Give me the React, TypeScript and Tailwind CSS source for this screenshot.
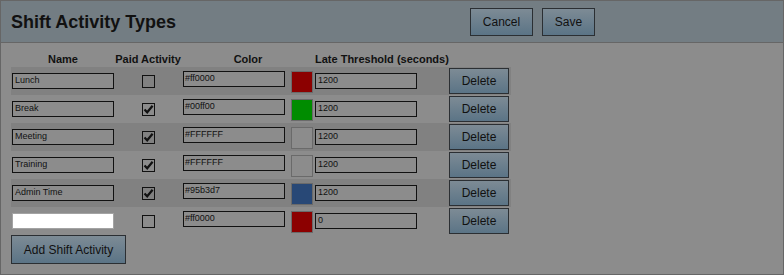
import React from "react";

type Row = { name: string; paid: boolean; color: string; swatch: string; late: string; blank?: boolean };

const rows: Row[] = [
  { name: "Lunch", paid: false, color: "#ff0000", swatch: "#8c0000", late: "1200" },
  { name: "Break", paid: true, color: "#00ff00", swatch: "#008c00", late: "1200" },
  { name: "Meeting", paid: true, color: "#FFFFFF", swatch: "#8c8c8c", late: "1200" },
  { name: "Training", paid: true, color: "#FFFFFF", swatch: "#8c8c8c", late: "1200" },
  { name: "Admin Time", paid: true, color: "#95b3d7", swatch: "#284876", late: "1200" },
  { name: "", paid: false, color: "#ff0000", swatch: "#8c0000", late: "0", blank: true },
];

const btn =
  "border border-[#2b2f33] bg-gradient-to-b from-[#7d8b95] to-[#5b7486] text-[12px] text-[#111] flex items-center justify-center";

function Check({ on }: { on: boolean }) {
  return (
    <div className="mt-[8px] w-[13px] h-[13px] border-[1.5px] border-[#111] flex items-center justify-center">
      {on && (
        <svg width="11" height="11" viewBox="0 0 11 11">
          <path d="M1.5 5.5 L4.2 8.3 L9.6 1.8" fill="none" stroke="#111" strokeWidth="2.2" />
        </svg>
      )}
    </div>
  );
}

export default function App() {
  return (
    <div
      className="w-[784px] h-[275px] border border-[#666] bg-[#8c8c8c] flex flex-col text-[#111]"
      style={{ fontFamily: '"Liberation Sans", Arial, sans-serif' }}
    >
      <div className="h-[42px] shrink-0 bg-[#737d83] border-b border-[#666] flex items-center pl-[10px]">
        <div className="text-[18px] font-bold leading-none">Shift Activity Types</div>
        <div className="ml-auto mr-[188px] flex gap-[9px] mt-[1px]">
          <div className={`${btn} w-[63px] h-[28px]`}>Cancel</div>
          <div className={`${btn} w-[53px] h-[28px]`}>Save</div>
        </div>
      </div>
      <div className="pl-[10px] flex flex-col">
        <div className="flex h-[24px] pt-[10px] text-[11px] font-bold leading-[13px]">
          <div className="w-[104px] text-center">Name</div>
          <div className="w-[66px] text-center">Paid Activity</div>
          <div className="w-[134px] text-center">Color</div>
          <div className="w-[132px] whitespace-nowrap">Late Threshold (seconds)</div>
        </div>
        {rows.map((r, i) => (
          <div
            key={i}
            className={`flex items-start w-[500px] h-[28px] text-[9px] ${i % 2 === 0 ? "bg-[#818181]" : ""}`}
          >
            <div className="w-[104px]">
              {r.blank ? (
                <div className="ml-[1px] mt-[6px] w-[102px] h-[16px] bg-white border border-[#a3a3a3]" />
              ) : (
                <div className="ml-[1px] mt-[6px] w-[102px] h-[16px] bg-[#8c8c8c] border border-[#111] flex items-center pl-[2px]">
                  {r.name}
                </div>
              )}
            </div>
            <div className="w-[66px] flex justify-center">
              <Check on={r.paid} />
            </div>
            <div className="w-[134px] flex">
              <div className="ml-[2px] mt-[4px] w-[102px] h-[16px] bg-[#8c8c8c] border border-[#111] pl-[1px] leading-[11px] pt-[1px]">
                {r.color}
              </div>
              <div
                className="ml-[6px] mt-[4px] w-[22px] h-[22px] border border-[#6a6a6a]"
                style={{ backgroundColor: r.swatch }}
              />
            </div>
            <div className="w-[132px]">
              <div className="mt-[6px] w-[102px] h-[16px] bg-[#8c8c8c] border border-[#111] flex items-center pl-[2px]">
                {r.late}
              </div>
            </div>
            <div className="w-[64px]">
              <div className={`${btn} ml-[2px] mt-[1px] w-[60px] h-[26px]`}>Delete</div>
            </div>
          </div>
        ))}
        <div className={`${btn} w-[115px] h-[29px]`}>Add Shift Activity</div>
      </div>
    </div>
  );
}
